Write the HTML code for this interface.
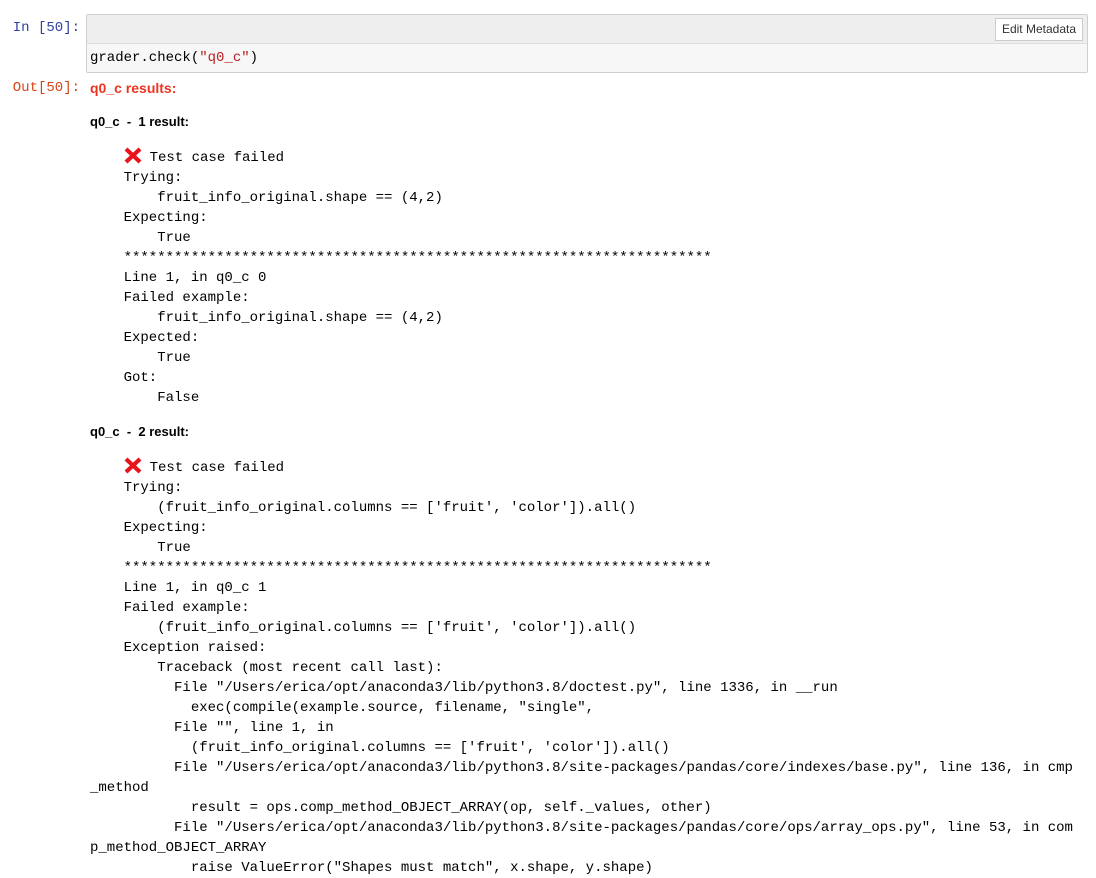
<!DOCTYPE html>
<html><head><style>
body{margin:0;background:#fff;width:1096px;height:878px;overflow:hidden;position:relative;font-family:"Liberation Sans",sans-serif}
.p{position:absolute;font-family:"Liberation Mono",monospace;font-size:14px;line-height:16px;text-align:right;width:80px;left:0}
pre{margin:0;font-family:"Liberation Mono",monospace;font-size:14px;line-height:20px;color:#000}
.x{display:inline-block;width:18px;height:17px;vertical-align:-3px;margin-right:8px}
</style></head><body>
<div class="p" style="top:20px;color:#303F9F">In&nbsp;[50]:</div>
<div style="position:absolute;left:86px;top:14px;width:1000px;height:57px;border:1px solid #cfcfcf;border-radius:2px;background:#f7f7f7">
 <div style="height:28px;background:#eee;border-bottom:1px solid #ddd;position:relative">
  <div style="position:absolute;right:4px;top:3px;height:21px;padding:0 6px;background:#fff;border:1px solid #ccc;font-size:12px;line-height:21px;color:#333">Edit Metadata</div>
 </div>
 <pre style="position:absolute;left:3px;top:34px;font-size:14px;line-height:18px">grader.check(<span style="color:#BA2121">"q0_c"</span>)</pre>
</div>
<div class="p" style="top:80px;color:#D84315">Out[50]:</div>
<div style="position:absolute;left:90px;top:80px;color:#ee3322;font-weight:bold;font-size:14px">q0_c results:</div>
<div style="position:absolute;left:90px;top:114px;font-weight:bold;font-size:13px">q0_c&nbsp; -&nbsp; 1 result:</div>
<pre style="position:absolute;left:90px;top:147px">    <svg class="x" viewBox="0 0 18 17"><path d="M2 2L16 15M16 2L2 15" stroke="#e8141c" stroke-width="4.2"/></svg>Test case failed
    Trying:
        fruit_info_original.shape == (4,2)
    Expecting:
        True
    **********************************************************************
    Line 1, in q0_c 0
    Failed example:
        fruit_info_original.shape == (4,2)
    Expected:
        True
    Got:
        False</pre>
<div style="position:absolute;left:90px;top:424px;font-weight:bold;font-size:13px">q0_c&nbsp; -&nbsp; 2 result:</div>
<pre style="position:absolute;left:90px;top:457px">    <svg class="x" viewBox="0 0 18 17"><path d="M2 2L16 15M16 2L2 15" stroke="#e8141c" stroke-width="4.2"/></svg>Test case failed
    Trying:
        (fruit_info_original.columns == ['fruit', 'color']).all()
    Expecting:
        True
    **********************************************************************
    Line 1, in q0_c 1
    Failed example:
        (fruit_info_original.columns == ['fruit', 'color']).all()
    Exception raised:
        Traceback (most recent call last):
          File "/Users/erica/opt/anaconda3/lib/python3.8/doctest.py", line 1336, in __run
            exec(compile(example.source, filename, "single",
          File "", line 1, in
            (fruit_info_original.columns == ['fruit', 'color']).all()
          File "/Users/erica/opt/anaconda3/lib/python3.8/site-packages/pandas/core/indexes/base.py", line 136, in cmp
_method
            result = ops.comp_method_OBJECT_ARRAY(op, self._values, other)
          File "/Users/erica/opt/anaconda3/lib/python3.8/site-packages/pandas/core/ops/array_ops.py", line 53, in com
p_method_OBJECT_ARRAY
            raise ValueError("Shapes must match", x.shape, y.shape)</pre>
</body></html>
